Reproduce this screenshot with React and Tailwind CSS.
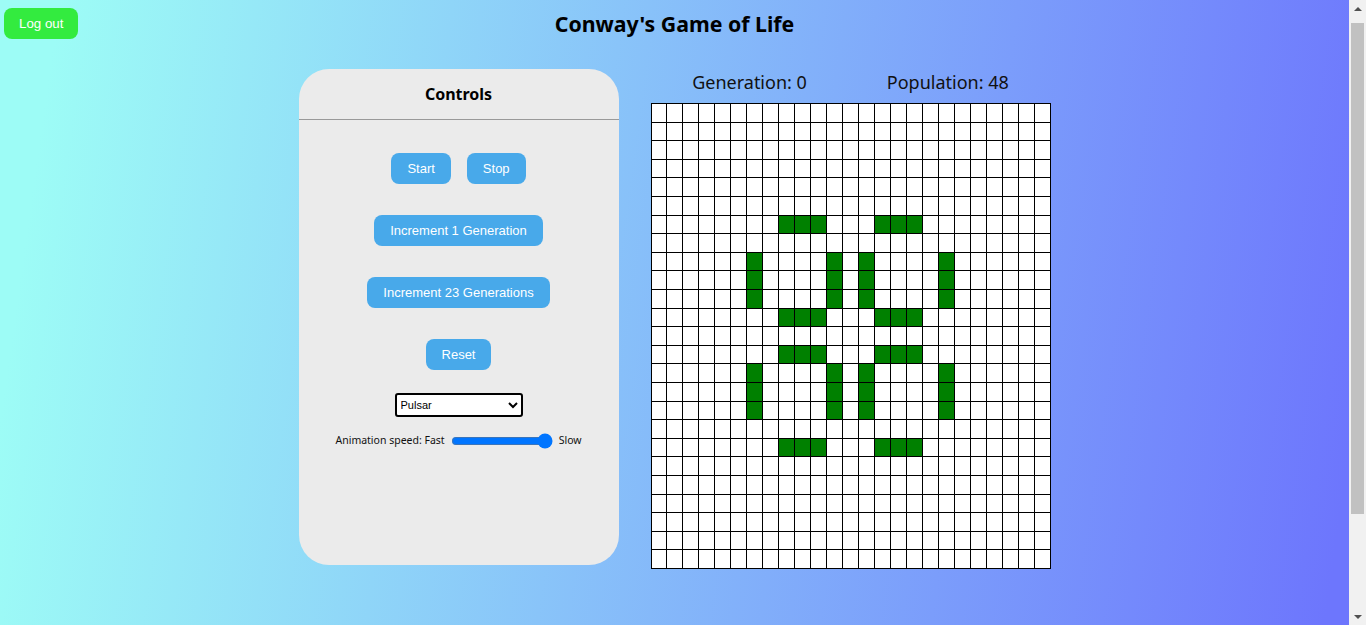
const SIZE = 25

// pulsar, as it shows on generation 0
const live = new Set()
for (const r of [6, 11, 13, 18]) for (const c of [8, 9, 10, 14, 15, 16]) live.add(r * SIZE + c)
for (const r of [8, 9, 10, 14, 15, 16]) for (const c of [6, 11, 13, 18]) live.add(r * SIZE + c)

const btn =
  "h-[31px] px-4 rounded-lg bg-[#48a9ea] text-white text-[13px] leading-none font-['Liberation_Sans',Arial,sans-serif]"

function Controls() {
  return (
    <div className="w-[320px] h-[496px] rounded-[30px] bg-[#ebebeb] flex flex-col items-center">
      <div className="w-full h-[51px] border-b border-[#999] flex items-center justify-center">
        <h2 className="text-[16px] font-bold text-black">Controls</h2>
      </div>
      <div className="flex flex-col items-center gap-[31px] pt-[33px]">
        <div className="flex gap-4">
          <button className={btn}>Start</button>
          <button className={btn}>Stop</button>
        </div>
        <button className={btn}>Increment 1 Generation</button>
        <button className={btn}>Increment 23 Generations</button>
        <button className={btn}>Reset</button>
      </div>
      <select
        defaultValue="pulsar"
        className="mt-[23px] w-[128px] h-[24px] border-2 border-black rounded-[3px] bg-white text-[11px] text-black font-['Liberation_Sans',Arial,sans-serif]"
      >
        <option value="random">Random</option>
        <option value="glider">Glider</option>
        <option value="pulsar">Pulsar</option>
      </select>
      <div className="mt-[16px] flex items-center gap-[6px] text-[10.5px] text-[#111]">
        <span>Animation speed: Fast</span>
        <input type="range" min="0" max="100" defaultValue="100" className="w-[102px] accent-[#0075ff]" />
        <span>Slow</span>
      </div>
    </div>
  )
}

function Board() {
  const cells = []
  for (let i = 0; i < SIZE * SIZE; i++) {
    cells.push(<div key={i} className={live.has(i) ? 'bg-[#008000]' : 'bg-white'} />)
  }
  return (
    <div className="flex flex-col">
      <div className="h-[28px] flex items-center justify-center gap-[80px] text-[18px] text-[#111]">
        <span>Generation: 0</span>
        <span>Population: 48</span>
      </div>
      <div className="mt-[6px] w-[400px] h-[466px] bg-black p-px gap-px grid grid-cols-[repeat(25,1fr)] grid-rows-[repeat(25,1fr)]">
        {cells}
      </div>
    </div>
  )
}

function Scrollbar() {
  return (
    <aside className="sticky top-0 w-[17px] h-[625px] shrink-0 bg-[#f1f1f1] flex flex-col items-center">
      <div className="h-[17px] flex items-center justify-center">
        <div className="w-0 h-0 border-x-[4px] border-x-transparent border-b-[4px] border-b-[#505050]" />
      </div>
      <div className="mt-[6px] w-[13px] h-[491px] bg-[#c1c1c1]" />
      <div className="flex-1" />
      <div className="h-[17px] flex items-center justify-center">
        <div className="w-0 h-0 border-x-[4px] border-x-transparent border-t-[4px] border-t-[#505050]" />
      </div>
    </aside>
  )
}

export default function App() {
  return (
    <div className="flex min-h-[752px] bg-[linear-gradient(98deg,#9dfcf6_4%,#6d76fd_96%)] font-['Noto_Sans','Open_Sans',sans-serif] text-black">
      <div className="flex-1">
        <header className="grid grid-cols-[1fr_auto_1fr] items-center pt-2 px-1">
          <div>
            <button className="h-[31px] px-[15px] rounded-lg bg-[#33eb3f] text-white text-[13.333px] leading-none font-['Liberation_Sans',Arial,sans-serif]">
              Log out
            </button>
          </div>
          <h1 className="text-[21.3px] font-bold">Conway's Game of Life</h1>
          <div />
        </header>
        <main className="mt-[29px] flex justify-center gap-8">
          <Controls />
          <Board />
        </main>
      </div>
      <Scrollbar />
    </div>
  )
}
